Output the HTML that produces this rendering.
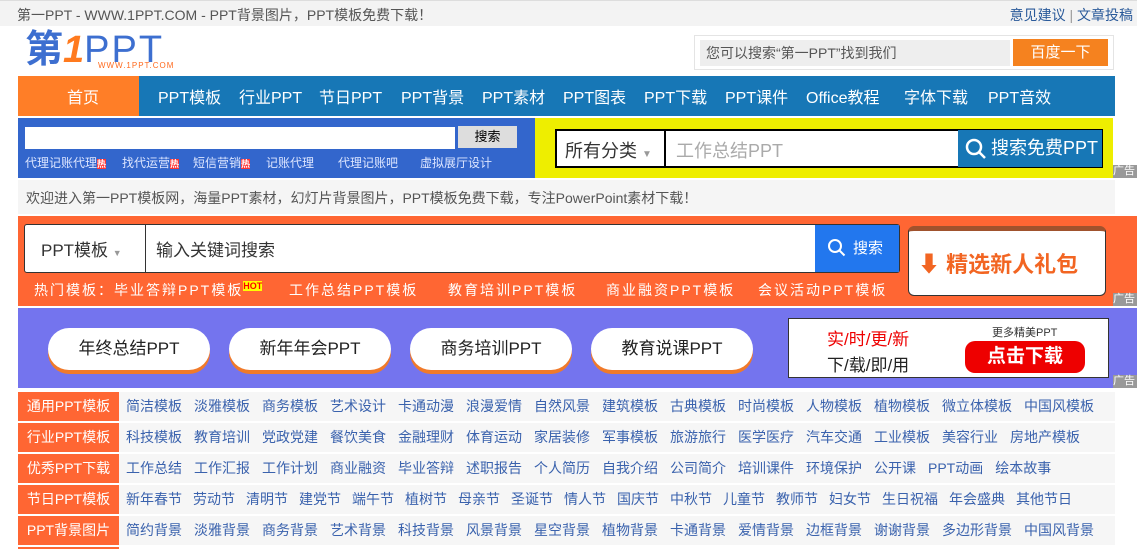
<!DOCTYPE html>
<html><head><meta charset="utf-8"><style>
*{margin:0;padding:0;box-sizing:border-box}
html{overflow:hidden;height:549px}
body{width:1137px;height:549px;overflow:hidden;background:#fff;font-family:"Liberation Sans","Noto Sans CJK SC",sans-serif;font-size:13px;color:#333;position:relative}
.a{position:absolute;white-space:nowrap}
.top{left:0;top:0;width:1137px;height:26px;background:#f3f3f3;border-top:1px solid #ddd}
.top .l{left:17px;top:4px;color:#555;font-size:14px}
.top .r{right:4px;top:4px;color:#2a5a9a;font-size:14px}
.nav{left:18px;top:76px;width:1097px;height:40px;background:#1777b6;color:#fff;font-size:16px}
.nav span{position:absolute;top:8px}
.cat{left:18px;width:101px;height:29px;background:#ff6633;color:#fff;font-size:14px;text-align:center;line-height:29px}
.links{left:119px;width:996px;height:29px;background:#f6f6f6;line-height:29px;color:#3a62ad;font-size:14px;padding-left:7px;white-space:nowrap}
.links span{margin-right:12px}
.links.s span{margin-right:11px}
.pill{top:328px;width:162px;height:42px;background:#fff;border-radius:21px;font-size:17px;text-align:center;line-height:42px;color:#222;box-shadow:0 4px 0 #f07a2a}
.ad{top:154px;color:#dde6ff;font-size:12px}
.ad b{background:#f33;color:#fff;font-size:9px}
.hot{top:280px;color:#fff;font-size:14px;letter-spacing:2px}
</style></head><body>
<div class="a top"><div class="a l">第一PPT - WWW.1PPT.COM - PPT背景图片，PPT模板免费下载！</div><div class="a r">意见建议 <span style="color:#999">|</span> 文章投稿</div></div>
<div class="a" style="left:25px;top:30px;font-size:38px;font-weight:bold;color:#3d6fd0;line-height:40px">第<span style="color:#ff7a1e;font-style:italic">1</span><span style="font-weight:normal;letter-spacing:2px">PPT</span></div>
<div class="a" style="left:98px;top:61px;font-size:8px;color:#ff6a1e;letter-spacing:1px">WWW.1PPT.COM</div>
<div class="a" style="left:694px;top:35px;width:420px;height:35px;border:1px solid #e4e4e4;background:#fff"></div>
<div class="a" style="left:700px;top:40px;width:310px;height:26px;background:#eee;color:#555;font-size:14px;line-height:26px;padding-left:6px">您可以搜索“第一PPT”找到我们</div>
<div class="a" style="left:1013px;top:39px;width:95px;height:27px;background:#f5821f;color:#fff;font-size:15px;text-align:center;line-height:27px">百度一下</div>
<div class="a nav"><div class="a" style="left:0;top:0;width:121px;height:40px;background:#ff7e27"></div><span style="left:49px">首页</span><span style="left:140px">PPT模板</span><span style="left:221px">行业PPT</span><span style="left:301px">节日PPT</span><span style="left:383px">PPT背景</span><span style="left:464px">PPT素材</span><span style="left:545px">PPT图表</span><span style="left:626px">PPT下载</span><span style="left:707px">PPT课件</span><span style="left:788px">Office教程</span><span style="left:886px">字体下载</span><span style="left:970px">PPT音效</span></div>
<div class="a" style="left:18px;top:118px;width:517px;height:60px;background:#3366cc"></div>
<div class="a" style="left:25px;top:127px;width:430px;height:22px;background:#fff"></div>
<div class="a" style="left:458px;top:126px;width:59px;height:22px;background:#ddd;font-size:13px;text-align:center;line-height:22px;color:#000">搜索</div>
<div class="a ad" style="left:25px">代理记账代理<b>热</b></div>
<div class="a ad" style="left:122px">找代运营<b>热</b></div>
<div class="a ad" style="left:193px">短信营销<b>热</b></div>
<div class="a ad" style="left:266px">记账代理</div>
<div class="a ad" style="left:338px">代理记账吧</div>
<div class="a ad" style="left:420px">虚拟展厅设计</div>
<div class="a" style="left:535px;top:118px;width:578px;height:60px;background:#eeee00"></div>
<div class="a" style="left:555px;top:129px;width:548px;height:39px;border:2px solid #000;background:#fff"></div>
<div class="a" style="left:565px;top:137px;font-size:18px;color:#333">所有分类 <span style="font-size:10px;color:#999">▼</span></div>
<div class="a" style="left:664px;top:129px;width:2px;height:39px;background:#000"></div>
<div class="a" style="left:676px;top:137px;font-size:18px;color:#aaa">工作总结PPT</div>
<div class="a" style="left:958px;top:130px;width:144px;height:37px;background:#1777b6;color:#fff;font-size:18px;line-height:37px;padding-left:33px;overflow:hidden">搜索免费PPT</div>
<svg class="a" style="left:965px;top:138px" width="22" height="22"><circle cx="9" cy="9" r="7" fill="none" stroke="#fff" stroke-width="2.5"/><path d="M14 14l6 6" stroke="#fff" stroke-width="2.5"/></svg>
<div class="a" style="left:1113px;top:165px;width:24px;height:13px;background:#999;color:#fff;font-size:11px;line-height:13px">广告</div>
<div class="a" style="left:18px;top:180px;width:1097px;height:34px;background:#f5f5f5"></div>
<div class="a" style="left:26px;top:188px;color:#555;font-size:14px">欢迎进入第一PPT模板网，海量PPT素材，幻灯片背景图片，PPT模板免费下载，专注PowerPoint素材下载！</div>
<div class="a" style="left:18px;top:216px;width:1119px;height:90px;background:#ff6633"></div>
<div class="a" style="left:24px;top:224px;width:876px;height:49px;background:#fff;border:1px solid #333;border-radius:3px"></div>
<div class="a" style="left:41px;top:236px;font-size:17px;color:#333">PPT模板 <span style="font-size:9px;color:#999">▼</span></div>
<div class="a" style="left:145px;top:225px;width:1px;height:47px;background:#333"></div>
<div class="a" style="left:156px;top:236px;font-size:17px;color:#333">输入关键词搜索</div>
<div class="a" style="left:815px;top:225px;width:84px;height:47px;background:#2277ee;color:#fff;font-size:15px;line-height:47px;padding-left:38px">搜索</div>
<svg class="a" style="left:827px;top:238px" width="20" height="20"><circle cx="8" cy="8" r="6" fill="none" stroke="#fff" stroke-width="2"/><path d="M12.5 12.5l5 5" stroke="#fff" stroke-width="2"/></svg>
<div class="a" style="left:908px;top:226px;width:198px;height:70px;background:#fff;border:1px solid #333;border-top:5px solid #a0522d;border-radius:6px"></div>
<div class="a" style="left:918px;top:247px;font-size:22px;font-weight:bold;color:#f26522">⬇ 精选新人礼包</div>
<div class="a hot" style="left:34px">热门模板：毕业答辩PPT模板<sup style="background:#ff0;color:#f00;font-size:9px;font-weight:bold;letter-spacing:0">HOT</sup></div>
<div class="a hot" style="left:289px">工作总结PPT模板</div>
<div class="a hot" style="left:448px">教育培训PPT模板</div>
<div class="a hot" style="left:606px">商业融资PPT模板</div>
<div class="a hot" style="left:758px">会议活动PPT模板</div>
<div class="a" style="left:1113px;top:293px;width:24px;height:13px;background:#999;color:#fff;font-size:11px;line-height:13px">广告</div>
<div class="a" style="left:18px;top:308px;width:1119px;height:80px;background:#7474ee"></div>
<div class="a pill" style="left:48px">年终总结PPT</div>
<div class="a pill" style="left:229px">新年年会PPT</div>
<div class="a pill" style="left:410px">商务培训PPT</div>
<div class="a pill" style="left:591px">教育说课PPT</div>
<div class="a" style="left:788px;top:318px;width:321px;height:60px;background:#fff;border:1px solid #333"></div>
<div class="a" style="left:827px;top:325px;color:#e00;font-size:17px">实/时/更/新</div>
<div class="a" style="left:827px;top:351px;color:#222;font-size:17px">下/载/即/用</div>
<div class="a" style="left:992px;top:324px;color:#333;font-size:11px">更多精美PPT</div>
<div class="a" style="left:965px;top:341px;width:120px;height:32px;background:#e00;border-radius:10px;color:#fff;font-size:19px;font-weight:bold;text-align:center;line-height:32px">点击下载</div>
<div class="a" style="left:1113px;top:375px;width:24px;height:13px;background:#999;color:#fff;font-size:11px;line-height:13px">广告</div>
<div class="a cat" style="top:392px">通用PPT模板</div><div class="a links" style="top:392px"><span>简洁模板</span><span>淡雅模板</span><span>商务模板</span><span>艺术设计</span><span>卡通动漫</span><span>浪漫爱情</span><span>自然风景</span><span>建筑模板</span><span>古典模板</span><span>时尚模板</span><span>人物模板</span><span>植物模板</span><span>微立体模板</span><span>中国风模板</span></div>
<div class="a cat" style="top:423px">行业PPT模板</div><div class="a links" style="top:423px"><span>科技模板</span><span>教育培训</span><span>党政党建</span><span>餐饮美食</span><span>金融理财</span><span>体育运动</span><span>家居装修</span><span>军事模板</span><span>旅游旅行</span><span>医学医疗</span><span>汽车交通</span><span>工业模板</span><span>美容行业</span><span>房地产模板</span></div>
<div class="a cat" style="top:454px">优秀PPT下载</div><div class="a links" style="top:454px"><span>工作总结</span><span>工作汇报</span><span>工作计划</span><span>商业融资</span><span>毕业答辩</span><span>述职报告</span><span>个人简历</span><span>自我介绍</span><span>公司简介</span><span>培训课件</span><span>环境保护</span><span>公开课</span><span>PPT动画</span><span>绘本故事</span></div>
<div class="a cat" style="top:485px">节日PPT模板</div><div class="a links s" style="top:485px"><span>新年春节</span><span>劳动节</span><span>清明节</span><span>建党节</span><span>端午节</span><span>植树节</span><span>母亲节</span><span>圣诞节</span><span>情人节</span><span>国庆节</span><span>中秋节</span><span>儿童节</span><span>教师节</span><span>妇女节</span><span>生日祝福</span><span>年会盛典</span><span>其他节日</span></div>
<div class="a cat" style="top:516px">PPT背景图片</div><div class="a links" style="top:516px"><span>简约背景</span><span>淡雅背景</span><span>商务背景</span><span>艺术背景</span><span>科技背景</span><span>风景背景</span><span>星空背景</span><span>植物背景</span><span>卡通背景</span><span>爱情背景</span><span>边框背景</span><span>谢谢背景</span><span>多边形背景</span><span>中国风背景</span></div>
<div class="a cat" style="top:547px;height:2px"></div>
</body></html>
